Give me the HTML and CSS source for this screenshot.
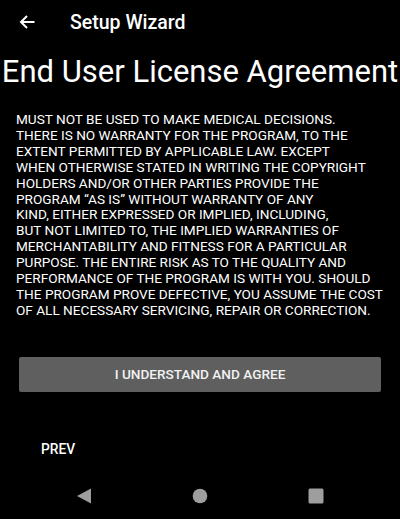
FILE: index.html
```html
<!DOCTYPE html>
<html>
<head>
<meta charset="utf-8">
<link rel="stylesheet" href="styles.css">
</head>
<body>
<div class="screen">
  <header class="appbar">
    <svg class="back" width="16" height="14" viewBox="0 0 16 14"><path d="M15.5 7H2M8 1L2 7l6 6" fill="none" stroke="#fff" stroke-width="2"/></svg>
    <span class="appbar-title">Setup Wizard</span>
  </header>
  <h1 class="heading">End User License Agreement</h1>
  <p class="license">MUST NOT BE USED TO MAKE MEDICAL DECISIONS.<br>THERE IS NO WARRANTY FOR THE PROGRAM, TO THE<br>EXTENT PERMITTED BY APPLICABLE LAW. EXCEPT<br>WHEN OTHERWISE STATED IN WRITING THE COPYRIGHT<br>HOLDERS AND/OR OTHER PARTIES PROVIDE THE<br>PROGRAM “AS IS” WITHOUT WARRANTY OF ANY<br>KIND, EITHER EXPRESSED OR IMPLIED, INCLUDING,<br>BUT NOT LIMITED TO, THE IMPLIED WARRANTIES OF<br>MERCHANTABILITY AND FITNESS FOR A PARTICULAR<br>PURPOSE. THE ENTIRE RISK AS TO THE QUALITY AND<br>PERFORMANCE OF THE PROGRAM IS WITH YOU. SHOULD<br>THE PROGRAM PROVE DEFECTIVE, YOU ASSUME THE COST<br>OF ALL NECESSARY SERVICING, REPAIR OR CORRECTION.</p>
  <button class="agree">I UNDERSTAND AND AGREE</button>
  <div class="footer">
    <span class="prev">PREV</span>
  </div>
  <nav class="navbar">
    <svg width="16" height="16" viewBox="0 0 16 16"><path d="M15 0.5V15.5L1 8Z" fill="#9e9e9e"/></svg>
    <svg width="16" height="16" viewBox="0 0 16 16"><circle cx="8" cy="8" r="7.3" fill="#9e9e9e"/></svg>
    <svg width="16" height="16" viewBox="0 0 16 16"><rect x="0.5" y="0.5" width="15" height="15" rx="1.5" fill="#9e9e9e"/></svg>
  </nav>
</div>
</body>
</html>
```
FILE: styles.css
```css
html, body {
  margin: 0;
  padding: 0;
  background: #000;
}
.screen {
  width: 400px;
  height: 519px;
  display: flex;
  flex-direction: column;
  color: #fff;
  font-family: Roboto, "Liberation Sans", sans-serif;
}
.appbar {
  height: 44px;
  display: flex;
  align-items: center;
  padding-left: 19px;
}
.back {
  margin-right: 35px;
}
.appbar-title {
  font-size: 19.5px;
  font-weight: 500;
}
.heading {
  margin: 8px 0 0;
  font-size: 31px;
  font-weight: 400;
  text-align: center;
  line-height: 40px;
  white-space: nowrap;
}
.license {
  margin: 20px 0 0 16px;
  font-size: 13.6px;
  line-height: 15.9px;
  white-space: nowrap;
}
.agree {
  margin: 38px 19px 0;
  height: 35px;
  flex: none;
  border: none;
  border-radius: 2px;
  background: #5f5f5f;
  color: #f2f2f2;
  font-family: Roboto, "Liberation Sans", sans-serif;
  font-size: 13.6px;
  font-weight: 500;
}
.footer {
  flex: 1;
  display: flex;
  align-items: flex-end;
  padding: 0 0 16px 41px;
}
.prev {
  font-size: 13.8px;
  font-weight: 500;
  line-height: 16px;
}
.navbar {
  height: 46px;
  flex: none;
  display: flex;
  justify-content: center;
  gap: 100px;
  align-items: center;
}
```
